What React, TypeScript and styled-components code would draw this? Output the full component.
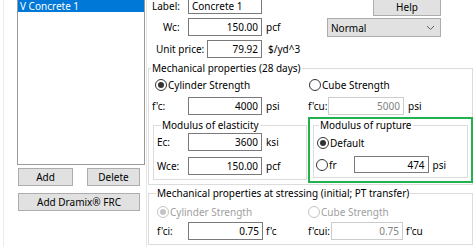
import React from "react";
import styled, { createGlobalStyle } from "styled-components";

const GlobalStyle = createGlobalStyle`
  html, body { margin: 0; padding: 0; background: #ffffff; overflow: hidden; }
  * { box-sizing: border-box; }
`;

const FONT = `"Noto Sans", "Open Sans", sans-serif`;

const Root = styled.div`
  display: flex;
  margin-top: -2px;
  width: 474px;
  height: 249px;
  font-family: ${FONT};
  font-size: 10px;
  color: #000;
`;

const LeftPanel = styled.div`
  margin-left: 3px;
  width: 144px;
  height: 100%;
  border-left: 1px solid #ececec;
  border-right: 1px solid #e6e6e6;
  padding-left: 13px;
  padding-top: 2px;
  display: flex;
  flex-direction: column;
`;

const ListBox = styled.div`
  width: 128px;
  height: 165px;
  border: 1px solid #9a9a9a;
  border-top: none;
  background: #fff;
`;

const ListItem = styled.div<{ $selected?: boolean }>`
  height: 12px;
  line-height: 12px;
  padding-left: 2px;
  background: ${(p) => (p.$selected ? "#0078d7" : "transparent")};
  color: ${(p) => (p.$selected ? "#fff" : "#000")};
  white-space: nowrap;
`;

const ButtonRow = styled.div`
  display: flex;
  gap: 14px;
  margin-top: 3px;
  margin-left: 1px;
`;

const Button = styled.button<{ $w: number; $h?: number }>`
  width: ${(p) => p.$w}px;
  height: ${(p) => p.$h ?? 18}px;
  padding: 0;
  margin: 0;
  background: #e1e1e1;
  border: 1px solid #adadad;
  font-family: ${FONT};
  font-size: 10px;
  color: #000;
  line-height: 1;
`;

const WideButton = styled(Button)`
  margin-top: 7px;
  margin-left: 1px;
`;

const RightPanel = styled.div`
  flex: 1;
  display: flex;
  flex-direction: column;
`;

const TopSection = styled.div`
  display: flex;
  height: 64px;
`;

const Fields = styled.div`
  display: flex;
  flex-direction: column;
  gap: 4px;
`;

const Row = styled.div<{ $h?: number; $mt?: number }>`
  display: flex;
  align-items: center;
  height: ${(p) => p.$h ?? 18}px;
  margin-top: ${(p) => p.$mt ?? 0}px;
  white-space: nowrap;
`;

const FieldLabel = styled.span<{ $w: number; $indent: number }>`
  width: ${(p) => p.$w}px;
  padding-left: ${(p) => p.$indent}px;
  flex: none;
`;

const TextBox = styled.div<{ $w: number; $align?: string; $disabled?: boolean; $ml?: number }>`
  width: ${(p) => p.$w}px;
  height: 100%;
  flex: none;
  margin-left: ${(p) => p.$ml ?? 0}px;
  border: 1px solid ${(p) => (p.$disabled ? "#cccccc" : "#7a7a7a")};
  background: #fff;
  color: ${(p) => (p.$disabled ? "#838383" : "#000")};
  padding: 0 3px;
  display: flex;
  align-items: center;
  justify-content: ${(p) => (p.$align === "left" ? "flex-start" : "flex-end")};
`;

const Unit = styled.span<{ $gap?: number }>`
  margin-left: ${(p) => p.$gap ?? 4}px;
`;

const Tools = styled.div`
  margin-left: auto;
  padding-right: 33px;
  display: flex;
  flex-direction: column;
  align-items: flex-end;
  gap: 2px;
`;

const Select = styled.div`
  width: 114px;
  height: 19px;
  background: #e1e1e1;
  border: 1px solid #adadad;
  display: flex;
  align-items: center;
  justify-content: space-between;
  padding: 0 5px 0 3px;
`;

const Group = styled.fieldset<{ $ml?: number; $mt?: number; $w: number; $h: number }>`
  margin: ${(p) => p.$mt ?? 0}px 0 0 ${(p) => p.$ml ?? 0}px;
  padding: 0;
  width: ${(p) => p.$w}px;
  height: ${(p) => p.$h}px;
  border: 1px solid #dcdcdc;
  min-width: 0;
`;

const Legend = styled.legend<{ $ml: number }>`
  margin-left: ${(p) => p.$ml}px;
  padding: 0 1px;
  height: 13px;
  line-height: 13px;
  white-space: nowrap;
`;

const Grid = styled.div`
  display: grid;
  grid-template-columns: 159px 164px;
`;

const Col = styled.div`
  display: flex;
  flex-direction: column;
`;

const RadioRow = styled.label<{ $indent: number; $mt?: number; $disabled?: boolean }>`
  display: flex;
  align-items: center;
  height: 12px;
  margin-top: ${(p) => p.$mt ?? 0}px;
  padding-left: ${(p) => p.$indent}px;
  color: ${(p) => (p.$disabled ? "#a0a0a0" : "#000")};
  white-space: nowrap;
`;

const Radio = styled.span<{ $checked?: boolean; $disabled?: boolean }>`
  width: 12px;
  height: 12px;
  flex: none;
  border-radius: 50%;
  border: 1px solid ${(p) => (p.$disabled ? "#c4c4c4" : "#333")};
  margin-right: 1px;
  display: flex;
  align-items: center;
  justify-content: center;
  &::after {
    content: "";
    display: ${(p) => (p.$checked ? "block" : "none")};
    width: 6px;
    height: 6px;
    border-radius: 50%;
    background: ${(p) => (p.$disabled ? "#c4c4c4" : "#333")};
  }
`;

const Highlight = styled.div`
  margin-top: 2px;
  margin-right: -1px;
  height: 66px;
  border: 2px solid #22b14c;
  padding-left: 3px;
`;

const Chevron = () => (
  <svg width="9" height="6" viewBox="0 0 9 6">
    <path d="M1 1 L4.5 4.5 L8 1" fill="none" stroke="#606060" strokeWidth="1" />
  </svg>
);

export default function App() {
  return (
    <>
      <GlobalStyle />
      <Root>
        <LeftPanel>
          <ListBox>
            <ListItem $selected>V Concrete 1</ListItem>
          </ListBox>
          <ButtonRow>
            <Button $w={55}>Add</Button>
            <Button $w={53}>Delete</Button>
          </ButtonRow>
          <WideButton $w={122}>Add Dramix® FRC</WideButton>
        </LeftPanel>

        <RightPanel>
          <TopSection>
            <Fields>
              <Row $h={16}>
                <FieldLabel $w={41} $indent={5}>Label:</FieldLabel>
                <TextBox $w={74} $align="left">Concrete 1</TextBox>
              </Row>
              <Row>
                <FieldLabel $w={41} $indent={16}>Wc:</FieldLabel>
                <TextBox $w={74}>150.00</TextBox>
                <Unit>pcf</Unit>
              </Row>
              <Row>
                <FieldLabel $w={60} $indent={9}>Unit price:</FieldLabel>
                <TextBox $w={55}>79.92</TextBox>
                <Unit $gap={6}>$/yd^3</Unit>
              </Row>
            </Fields>
            <Tools>
              <Button $w={68} $h={18}>Help</Button>
              <Select>
                <span>Normal</span>
                <Chevron />
              </Select>
            </Tools>
          </TopSection>

          <Group $ml={1} $w={325} $h={123}>
            <Legend $ml={2}>Mechanical properties (28 days)</Legend>
            <Grid>
              <Col>
                <RadioRow $indent={6} $mt={4}>
                  <Radio $checked />
                  Cylinder Strength
                </RadioRow>
                <Row $mt={6}>
                  <FieldLabel $w={39} $indent={3}>f'c:</FieldLabel>
                  <TextBox $w={74}>4000</TextBox>
                  <Unit>psi</Unit>
                </Row>
                <Group $ml={4} $mt={4} $w={154} $h={61}>
                  <Legend $ml={7}>Modulus of elasticity</Legend>
                  <Row $mt={1}>
                    <FieldLabel $w={34} $indent={3}>Ec:</FieldLabel>
                    <TextBox $w={74}>3600</TextBox>
                    <Unit>ksi</Unit>
                  </Row>
                  <Row $mt={6}>
                    <FieldLabel $w={34} $indent={3}>Wce:</FieldLabel>
                    <TextBox $w={74}>150.00</TextBox>
                    <Unit>pcf</Unit>
                  </Row>
                </Group>
              </Col>
              <Col>
                <RadioRow $indent={1} $mt={4}>
                  <Radio />
                  Cube Strength
                </RadioRow>
                <Row $mt={6}>
                  <FieldLabel $w={20} $indent={0}>f'cu:</FieldLabel>
                  <TextBox $w={76} $disabled>5000</TextBox>
                  <Unit>psi</Unit>
                </Row>
                <Highlight>
                  <Group $w={155} $h={59}>
                    <Legend $ml={5}>Modulus of rupture</Legend>
                    <RadioRow $indent={3} $mt={5}>
                      <Radio $checked />
                      Default
                    </RadioRow>
                    <Row $h={17} $mt={7}>
                      <RadioRow $indent={2}>
                        <Radio />
                        fr
                      </RadioRow>
                      <TextBox $w={75} $ml={17}>474</TextBox>
                      <Unit>psi</Unit>
                    </Row>
                  </Group>
                </Highlight>
              </Col>
            </Grid>
          </Group>

          <Group $ml={1} $mt={2} $w={325} $h={58}>
            <Legend $ml={7}>Mechanical properties at stressing (initial; PT transfer)</Legend>
            <Grid>
              <Col>
                <RadioRow $indent={8} $mt={6} $disabled>
                  <Radio $checked $disabled />
                  Cylinder Strength
                </RadioRow>
                <Row $mt={4}>
                  <FieldLabel $w={39} $indent={8}>f'ci:</FieldLabel>
                  <TextBox $w={75}>0.75</TextBox>
                  <Unit $gap={3}>f'c</Unit>
                </Row>
              </Col>
              <Col>
                <RadioRow $indent={0} $mt={6} $disabled>
                  <Radio $disabled />
                  Cube Strength
                </RadioRow>
                <Row $mt={4}>
                  <FieldLabel $w={23} $indent={0}>f'cui:</FieldLabel>
                  <TextBox $w={72} $disabled>0.75</TextBox>
                  <Unit $gap={3}>f'cu</Unit>
                </Row>
              </Col>
            </Grid>
          </Group>
        </RightPanel>
      </Root>
    </>
  );
}
